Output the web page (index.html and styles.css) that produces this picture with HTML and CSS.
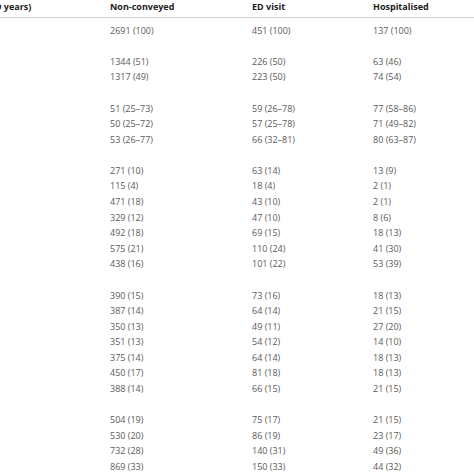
FILE: index.html
```html
<!DOCTYPE html>
<html>
<head>
<meta charset="utf-8">
<link rel="stylesheet" href="styles.css">
</head>
<body>
<div class="table">
  <div class="row head">
    <div class="cell first"><span class="cut">(≥19 years)</span></div>
    <div class="cell">Non-conveyed</div>
    <div class="cell">ED visit</div>
    <div class="cell">Hospitalised</div>
  </div>
  <div class="body">
    <div class="row"><div class="cell"></div><div class="cell">2691 (100)</div><div class="cell">451 (100)</div><div class="cell">137 (100)</div></div>
    <div class="row gap"></div>
    <div class="row"><div class="cell"></div><div class="cell">1344 (51)</div><div class="cell">226 (50)</div><div class="cell">63 (46)</div></div>
    <div class="row"><div class="cell"></div><div class="cell">1317 (49)</div><div class="cell">223 (50)</div><div class="cell">74 (54)</div></div>
    <div class="row gap"></div>
    <div class="row"><div class="cell"></div><div class="cell">51 (25–73)</div><div class="cell">59 (26–78)</div><div class="cell">77 (58–86)</div></div>
    <div class="row"><div class="cell"></div><div class="cell">50 (25–72)</div><div class="cell">57 (25–78)</div><div class="cell">71 (49–82)</div></div>
    <div class="row"><div class="cell"></div><div class="cell">53 (26–77)</div><div class="cell">66 (32–81)</div><div class="cell">80 (63–87)</div></div>
    <div class="row gap"></div>
    <div class="row"><div class="cell"></div><div class="cell">271 (10)</div><div class="cell">63 (14)</div><div class="cell">13 (9)</div></div>
    <div class="row"><div class="cell"></div><div class="cell">115 (4)</div><div class="cell">18 (4)</div><div class="cell">2 (1)</div></div>
    <div class="row"><div class="cell"></div><div class="cell">471 (18)</div><div class="cell">43 (10)</div><div class="cell">2 (1)</div></div>
    <div class="row"><div class="cell"></div><div class="cell">329 (12)</div><div class="cell">47 (10)</div><div class="cell">8 (6)</div></div>
    <div class="row"><div class="cell"></div><div class="cell">492 (18)</div><div class="cell">69 (15)</div><div class="cell">18 (13)</div></div>
    <div class="row"><div class="cell"></div><div class="cell">575 (21)</div><div class="cell">110 (24)</div><div class="cell">41 (30)</div></div>
    <div class="row"><div class="cell"></div><div class="cell">438 (16)</div><div class="cell">101 (22)</div><div class="cell">53 (39)</div></div>
    <div class="row gap"></div>
    <div class="row"><div class="cell"></div><div class="cell">390 (15)</div><div class="cell">73 (16)</div><div class="cell">18 (13)</div></div>
    <div class="row"><div class="cell"></div><div class="cell">387 (14)</div><div class="cell">64 (14)</div><div class="cell">21 (15)</div></div>
    <div class="row"><div class="cell"></div><div class="cell">350 (13)</div><div class="cell">49 (11)</div><div class="cell">27 (20)</div></div>
    <div class="row"><div class="cell"></div><div class="cell">351 (13)</div><div class="cell">54 (12)</div><div class="cell">14 (10)</div></div>
    <div class="row"><div class="cell"></div><div class="cell">375 (14)</div><div class="cell">64 (14)</div><div class="cell">18 (13)</div></div>
    <div class="row"><div class="cell"></div><div class="cell">450 (17)</div><div class="cell">81 (18)</div><div class="cell">18 (13)</div></div>
    <div class="row"><div class="cell"></div><div class="cell">388 (14)</div><div class="cell">66 (15)</div><div class="cell">21 (15)</div></div>
    <div class="row gap"></div>
    <div class="row"><div class="cell"></div><div class="cell">504 (19)</div><div class="cell">75 (17)</div><div class="cell">21 (15)</div></div>
    <div class="row"><div class="cell"></div><div class="cell">530 (20)</div><div class="cell">86 (19)</div><div class="cell">23 (17)</div></div>
    <div class="row"><div class="cell"></div><div class="cell">732 (28)</div><div class="cell">140 (31)</div><div class="cell">49 (36)</div></div>
    <div class="row"><div class="cell"></div><div class="cell">869 (33)</div><div class="cell">150 (33)</div><div class="cell">44 (32)</div></div>
  </div>
</div>
</body>
</html>
```
FILE: styles.css
```css
html, body {
  margin: 0;
  padding: 0;
  background: #ffffff;
  overflow: hidden;
}
body {
  width: 474px;
  height: 474px;
  font-family: "Open Sans", "Noto Sans", sans-serif;
}
.table {
  width: 474px;
}
.row {
  display: grid;
  grid-template-columns: 110px 142px 121px 1fr;
  height: 15.58px;
  line-height: 15.58px;
  font-size: 9px;
  color: #5a5a5a;
  white-space: nowrap;
}
.head {
  height: 17px;
  line-height: 14px;
  font-size: 9px;
  font-weight: 700;
  color: #222222;
  border-bottom: 1px solid #d4d4d4;
}
.first {
  overflow: hidden;
}
.cut {
  display: inline-block;
  margin-left: -17px;
}
.body {
  padding-top: 4.7px;
}
```
